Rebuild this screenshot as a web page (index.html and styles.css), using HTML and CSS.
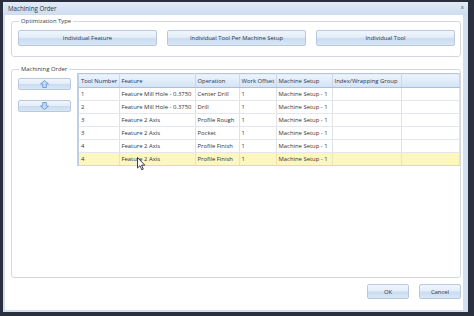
FILE: index.html
```html
<!DOCTYPE html>
<html>
<head>
<meta charset="utf-8">
<link rel="stylesheet" href="styles.css">
</head>
<body>
<div class="window">
  <div class="titlebar">
    <span class="title">Machining Order</span>
    <span class="close">x</span>
  </div>
  <div class="frame">
    <fieldset class="group opt">
      <legend>Optimization Type</legend>
      <div class="opt-buttons">
        <button class="btn">Individual Feature</button>
        <button class="btn">Individual Tool Per Machine Setup</button>
        <button class="btn">Individual Tool</button>
      </div>
    </fieldset>
    <fieldset class="group mo">
      <legend>Machining Order</legend>
      <div class="mo-body">
        <div class="movers">
          <button class="btn mover">
            <svg width="9" height="8" viewBox="0 0 9 8"><polygon points="4.5,0.5 8.5,4 6.3,4 6.3,7.5 2.7,7.5 2.7,4 0.5,4" fill="#c3daf5" stroke="#6b98d2" stroke-width="0.9"/></svg>
          </button>
          <button class="btn mover">
            <svg width="9" height="8" viewBox="0 0 9 8"><polygon points="4.5,7.5 8.5,4 6.3,4 6.3,0.5 2.7,0.5 2.7,4 0.5,4" fill="#c3daf5" stroke="#6b98d2" stroke-width="0.9"/></svg>
          </button>
        </div>
        <div class="grid-wrap">
          <table class="grid">
            <colgroup>
              <col style="width:41px"><col style="width:76px"><col style="width:44px"><col style="width:37px"><col style="width:56px"><col style="width:69px"><col>
            </colgroup>
            <thead>
              <tr><th>Tool Number</th><th>Feature</th><th>Operation</th><th>Work Offset</th><th>Machine Setup</th><th>Index/Wrapping Group</th><th></th></tr>
            </thead>
            <tbody>
              <tr><td>1</td><td>Feature Mill Hole - 0.3750</td><td>Center Drill</td><td>1</td><td>Machine Setup - 1</td><td></td><td></td></tr>
              <tr><td>2</td><td>Feature Mill Hole - 0.3750</td><td>Drill</td><td>1</td><td>Machine Setup - 1</td><td></td><td></td></tr>
              <tr><td>3</td><td>Feature 2 Axis</td><td>Profile Rough</td><td>1</td><td>Machine Setup - 1</td><td></td><td></td></tr>
              <tr><td>3</td><td>Feature 2 Axis</td><td>Pocket</td><td>1</td><td>Machine Setup - 1</td><td></td><td></td></tr>
              <tr><td>4</td><td>Feature 2 Axis</td><td>Profile Finish</td><td>1</td><td>Machine Setup - 1</td><td></td><td></td></tr>
              <tr class="sel"><td>4</td><td>Feature 2 Axis</td><td>Profile Finish</td><td>1</td><td>Machine Setup - 1</td><td></td><td></td></tr>
            </tbody>
          </table>
          <svg class="cursor" width="9" height="14" viewBox="0 0 9 14"><path d="M0.5,0.5 L0.5,11 L3,8.7 L4.8,12.8 L6.3,12.1 L4.6,8.2 L7.8,8.2 Z" fill="#ffffff" stroke="#111111" stroke-width="0.8" stroke-linejoin="round"/></svg>
        </div>
      </div>
    </fieldset>
    <div class="footer">
      <button class="btn dlg">OK</button>
      <button class="btn dlg">Cancel</button>
    </div>
  </div>
</div>
</body>
</html>
```

FILE: styles.css
```css
html, body {
  margin: 0;
  padding: 0;
}
body {
  width: 474px;
  height: 316px;
  overflow: hidden;
  background: #2a303d;
  font-family: "Open Sans", "Liberation Sans", sans-serif;
  font-size: 5.9px;
  color: #2a2a2a;
}
.window {
  margin: 2px 6px 0 3px;
  height: 310px;
  display: flex;
  flex-direction: column;
}
.titlebar {
  height: 13px;
  flex: none;
  display: flex;
  align-items: center;
  justify-content: space-between;
  padding: 0 4px 0 5px;
  background: linear-gradient(#e3ecf7, #cddcef);
  color: #2a3444;
  font-size: 6.2px;
}
.close {
  font-size: 6px;
  color: #4a5566;
  margin-top: -3px;
}
.frame {
  flex: 1;
  display: flex;
  flex-direction: column;
  background: #ffffff;
  border-left: 2px solid #d2dfef;
  border-right: 5px solid #d2dfef;
  border-bottom: 2px solid #d2dfef;
  padding: 2px 2px 0 6px;
}
.group {
  margin: 0;
  border: 1px solid #d3d9df;
  border-radius: 3px;
  min-width: 0;
}
.group legend {
  padding: 0 2px;
  margin-left: 1px;
  line-height: 8px;
  color: #3a3a3a;
}
.opt {
  padding: 5px 5px 10px 6px;
}
.opt-buttons {
  display: flex;
  gap: 10px;
}
.btn {
  font-family: inherit;
  font-size: 5.9px;
  color: #27364e;
  border: 1px solid #b8c9dd;
  border-radius: 2px;
  background: linear-gradient(#f1f6fc 0%, #e4edf8 45%, #cbdcf1 55%, #d9e7f6 100%);
  padding: 0;
  margin: 0;
  display: flex;
  align-items: center;
  justify-content: center;
}
.opt-buttons .btn {
  width: 139px;
  height: 16px;
}
.mo {
  margin-top: 8px;
  height: 213px;
  box-sizing: border-box;
  padding: 0 1px 0 6px;
}
.mo-body {
  display: flex;
  gap: 6px;
}
.movers {
  display: flex;
  flex-direction: column;
  gap: 10px;
  padding-top: 5px;
}
.mover {
  width: 53px;
  height: 12px;
}
.grid-wrap {
  flex: 1;
  position: relative;
}
.grid {
  width: 383px;
  border-collapse: collapse;
  table-layout: fixed;
  border: 1px solid #b9c7d6;
  border-left: 2px solid #bfd0e4;
}
.grid th {
  height: 13px;
  padding: 0 0 0 2px;
  text-align: left;
  font-weight: normal;
  color: #1f3250;
  background: linear-gradient(#edf4fc, #d3e3f5);
  border-right: 1px solid #c8d7e9;
  border-bottom: 1px solid #a9c0dc;
  white-space: nowrap;
  overflow: hidden;
}
.grid td {
  height: 12px;
  padding: 0 0 0 2px;
  border-right: 1px solid #dfe3e8;
  border-bottom: 1px solid #e3e7ec;
  white-space: nowrap;
  overflow: hidden;
  color: #333333;
}
.grid tr.sel td {
  background: #fcf7be;
  border-top: 1px solid #e5dc96;
  border-bottom: 1px solid #e5dc96;
  border-right-color: #ece5b0;
}
.cursor {
  position: absolute;
  left: 60px;
  top: 84px;
}
.footer {
  display: flex;
  justify-content: flex-end;
  gap: 10px;
  margin-top: 6px;
  padding-right: 0;
}
.dlg {
  width: 42px;
  height: 15px;
}
```
